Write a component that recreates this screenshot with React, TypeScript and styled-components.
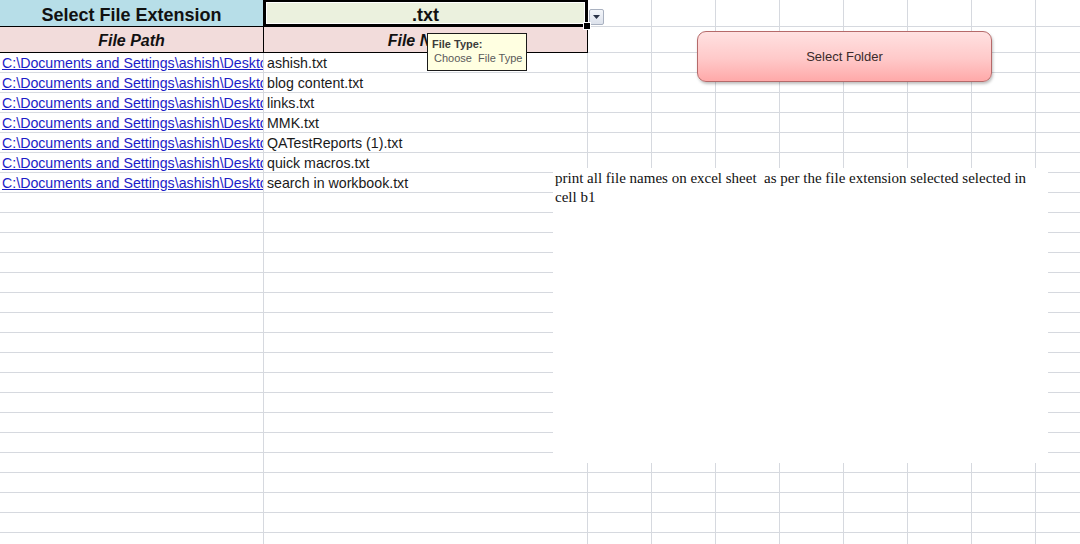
import styled, { createGlobalStyle } from 'styled-components';

const GlobalStyle = createGlobalStyle`
  html, body {
    margin: 0;
    padding: 0;
    background: #ffffff;
    overflow: hidden;
  }
`;

const EXTRA_COLS = 8;
const EMPTY_ROWS = 18;

const files = [
  'ashish.txt',
  'blog content.txt',
  'links.txt',
  'MMK.txt',
  'QATestReports (1).txt',
  'quick macros.txt',
  'search in workbook.txt'
];

const Sheet = styled.div`
  position: relative;
  display: grid;
  grid-template-columns: 264px 324px repeat(${EXTRA_COLS}, 64px);
  grid-template-rows: 27px 26px repeat(${files.length + EMPTY_ROWS}, 20px);
  width: 1080px;
  height: 544px;
  overflow: hidden;
  font-family: 'Liberation Sans', Arial, sans-serif;
`;

const Cell = styled.div<{ $fill?: string; $edge?: boolean }>`
  box-sizing: border-box;
  position: relative;
  display: flex;
  align-items: center;
  overflow: hidden;
  white-space: nowrap;
  min-width: 0;
  background: ${(p) => p.$fill || '#ffffff'};
  border-right: 1px solid ${(p) => (p.$edge ? '#000000' : '#d6d9df')};
  border-bottom: 1px solid ${(p) => (p.$edge ? '#000000' : '#d6d9df')};
`;

const TitleCell = styled(Cell)<{ $selected?: boolean }>`
  justify-content: center;
  padding-top: 4px;
  font-size: 18px;
  font-weight: 700;
  color: #111111;
  box-shadow: ${(p) => (p.$selected ? 'inset 0 0 0 2px #000000, inset 0 0 0 3px #ffffff' : 'none')};
  overflow: visible;
`;

const HeadCell = styled(Cell)`
  justify-content: center;
  padding-top: 3px;
  font-size: 16px;
  font-weight: 700;
  font-style: italic;
  color: #111111;
`;

const FillHandle = styled.span`
  position: absolute;
  right: -4px;
  bottom: -4px;
  width: 6px;
  height: 6px;
  background: #000000;
  border: 1px solid #ffffff;
  z-index: 2;
`;

const LinkCell = styled(Cell)`
  padding: 1px 0 0 2px;
  font-size: 14.2px;
  color: #1c1cc8;
  text-decoration: underline;
`;

const TextCell = styled(Cell)`
  padding: 1px 0 0 3px;
  font-size: 14.2px;
  color: #1a1a1a;
`;

const DropButton = styled.div`
  position: absolute;
  left: 589px;
  top: 9px;
  width: 15px;
  height: 16px;
  box-sizing: border-box;
  border: 1px solid #a9b1c0;
  border-radius: 2px;
  background: linear-gradient(180deg, #f4f6fa 0%, #dde2ec 100%);
  display: flex;
  align-items: center;
  justify-content: center;
`;

const Tip = styled.div`
  position: absolute;
  left: 427px;
  top: 33px;
  width: 100px;
  height: 38px;
  box-sizing: border-box;
  border: 1px solid #1a1a1a;
  background: #ffffe1;
  padding: 3px 0 0 4px;
  font-family: 'Liberation Sans', Arial, sans-serif;
  font-size: 11px;
  line-height: 14px;
  color: #4a4a4a;
  white-space: pre;

  .label {
    font-weight: 700;
    color: #3c3c3c;
  }

  .hint {
    padding-left: 2px;
    color: #5a5a5a;
  }
`;

const FolderButton = styled.div`
  position: absolute;
  left: 697px;
  top: 31px;
  width: 295px;
  height: 51px;
  box-sizing: border-box;
  border: 1px solid #b56a6a;
  border-radius: 9px;
  background: linear-gradient(180deg, #ffe1e1 0%, #ffc9c9 55%, #ffa9a9 100%);
  box-shadow: 1px 2px 3px rgba(0, 0, 0, 0.25);
  display: flex;
  align-items: center;
  justify-content: center;
  font-size: 13px;
  color: #3a2a2a;
`;

const NoteBox = styled.div`
  position: absolute;
  left: 553px;
  top: 168px;
  width: 495px;
  height: 295px;
  box-sizing: border-box;
  background: #ffffff;
  padding: 1px 4px 0 2px;
  font-family: 'Liberation Serif', 'Times New Roman', serif;
  font-size: 15px;
  line-height: 19px;
  color: #111111;
  white-space: pre-wrap;
`;

const App = () => {
  const rows = [...files, ...Array(EMPTY_ROWS).fill('')];
  const blanks = (key: string) =>
    Array.from({ length: EXTRA_COLS }, (_, i) => <Cell key={`${key}-${i}`} />);

  return (
    <>
      <GlobalStyle />
      <Sheet>
        <TitleCell $fill="#b7dee8" $edge>Select File Extension</TitleCell>
        <TitleCell $fill="#ebf1de" $edge $selected>
          .txt
          <FillHandle />
        </TitleCell>
        {blanks('r1')}

        <HeadCell $fill="#f2dcdb" $edge>File Path</HeadCell>
        <HeadCell $fill="#f2dcdb" $edge>File Name</HeadCell>
        {blanks('r2')}

        {rows.map((name, index) =>
          name ? (
            [
              <LinkCell key={`a${index}`}>{`C:\\Documents and Settings\\ashish\\Desktop\\test\\${name}`}</LinkCell>,
              <TextCell key={`b${index}`}>{name}</TextCell>,
              ...blanks(`r${index}`)
            ]
          ) : (
            [<Cell key={`a${index}`} />, <Cell key={`b${index}`} />, ...blanks(`r${index}`)]
          )
        )}

        <DropButton>
          <svg width="7" height="4" viewBox="0 0 7 4">
            <path d="M0 0 H7 L3.5 4 Z" fill="#2a3347" />
          </svg>
        </DropButton>

        <Tip>
          <div className="label">File Type:</div>
          <div className="hint">Choose  File Type</div>
        </Tip>

        <FolderButton>Select Folder</FolderButton>

        <NoteBox>print all file names on excel sheet  as per the file extension selected selected in cell b1</NoteBox>
      </Sheet>
    </>
  );
};

export default App;
